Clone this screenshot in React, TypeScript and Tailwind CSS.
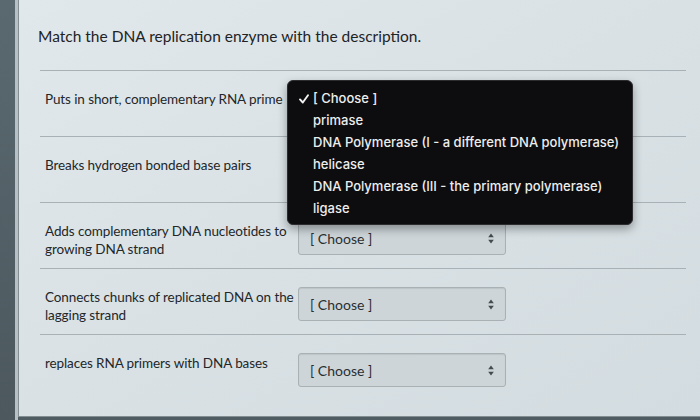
import React from 'react';

const rows = [
  { label: 'Puts in short, complementary RNA prime', covered: true },
  { label: 'Breaks hydrogen bonded base pairs', covered: true },
  { label: 'Adds complementary DNA nucleotides to growing DNA strand' },
  { label: 'Connects chunks of replicated DNA on the lagging strand' },
  { label: 'replaces RNA primers with DNA bases' },
];

const options = [
  '[ Choose ]',
  'primase',
  'DNA Polymerase (I - a different DNA polymerase)',
  'helicase',
  'DNA Polymerase (III - the primary polymerase)',
  'ligase',
];

function Arrows() {
  return (
    <svg width="6" height="11" viewBox="0 0 6 11" className="text-[#444b50]">
      <path d="M3 0.5 L5.8 4.3 H0.2 Z" fill="currentColor" />
      <path d="M3 10.5 L5.8 6.7 H0.2 Z" fill="currentColor" />
    </svg>
  );
}

function ChooseBox({ hidden }: { hidden?: boolean }) {
  return (
    <div
      className={
        'flex h-[34px] w-[208px] items-center justify-between rounded-[3px] border border-[#a9b1b5] bg-[#cdd5d9] pl-[11px] pr-[11px] shadow-[inset_0_1px_1px_rgba(0,0,0,0.08)] ' +
        (hidden ? 'invisible' : '')
      }
    >
      <span className="text-[14px] text-[#2a2e31]">[ Choose ]</span>
      <Arrows />
    </div>
  );
}

export default function App() {
  return (
    <div
      className="relative flex h-[420px] w-[700px] overflow-hidden bg-[#4f5c62]"
      style={{ fontFamily: 'Lato, "Open Sans", sans-serif' }}
    >
      {/* dark bezel on the left */}
      <div className="h-full w-[15px] shrink-0 bg-gradient-to-b from-[#5a6970] to-[#4c585e]" />
      <div className="h-full w-[3px] shrink-0 bg-[#b7c1c5]" />

      <div className="flex h-[417px] flex-1 flex-col border-l border-b border-[#838e93] bg-gradient-to-br from-[#e1e8eb] via-[#d9e1e5] to-[#d3dce0]">
        <div className="flex h-[70px] items-center pl-[19px] pt-[3px]">
          <h1 className="text-[15.5px] text-[#1e2326]">Match the DNA replication enzyme with the description.</h1>
        </div>

        <div className="ml-[21px] mr-[14px] flex flex-col">
          {rows.map((r) => (
            <div key={r.label} className="flex h-[66px] border-t border-[#a8b1b5] pt-[18px] pl-[5px]">
              <div className="w-[253px] shrink-0 pr-[2px] pt-[1px] text-[13.5px] leading-[18px] tracking-[-0.1px] text-[#22272a]">
                <span className={r.covered ? 'whitespace-nowrap' : ''}>{r.label}</span>
              </div>
              <ChooseBox hidden={r.covered} />
            </div>
          ))}
        </div>
      </div>

      {/* open dropdown menu */}
      <div
        className="absolute left-[287px] top-[80px] w-[346px] rounded-[6px] border border-[#2c2c2e] bg-[#0d0d0f] pb-[4px] pt-[7px] text-[13px] font-medium text-[#ededed] shadow-[0_4px_10px_rgba(0,0,0,0.35)]"
        style={{ fontFamily: 'Inter, "Liberation Sans", sans-serif' }}
      >
        {options.map((o, i) => (
          <div key={o} className="flex h-[22px] items-center">
            <span className="flex w-[25px] justify-start pl-[11px]">
              {i === 0 && (
                <svg width="10" height="10" viewBox="0 0 10 10">
                  <path d="M1 5.4 L3.8 8.5 L9 1.2" fill="none" stroke="#f2f2f2" strokeWidth="1.9" strokeLinecap="round" strokeLinejoin="round" />
                </svg>
              )}
            </span>
            <span>{o}</span>
          </div>
        ))}
      </div>
    </div>
  );
}
